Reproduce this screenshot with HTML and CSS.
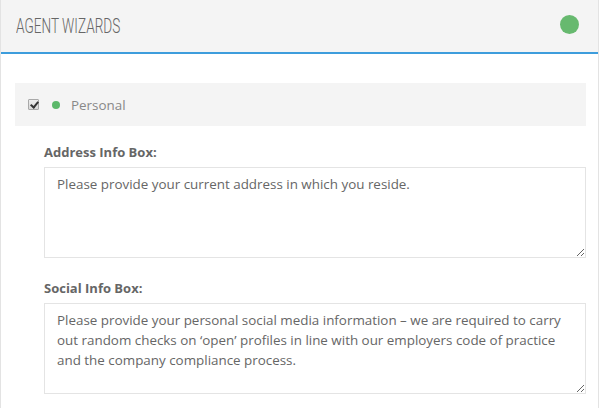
FILE: index.html
```html
<!DOCTYPE html>
<html>
<head>
<meta charset="utf-8">
<link rel="stylesheet" href="styles.css">
</head>
<body>
<div class="panel">
  <div class="panel-head">
    <span class="title">AGENT WIZARDS</span>
    <span class="status-dot"></span>
  </div>
  <div class="panel-body">
    <div class="section-row">
      <input type="checkbox" class="check" checked>
      <span class="dot"></span>
      <span class="section-name">Personal</span>
    </div>
    <div class="fields">
      <label class="field-label">Address Info Box:</label>
      <textarea class="field-box">Please provide your current address in which you reside.</textarea>
      <label class="field-label">Social Info Box:</label>
      <textarea class="field-box">Please provide your personal social media information – we are required to carry out random checks on ‘open’ profiles in line with our employers code of practice and the company compliance process.</textarea>
    </div>
  </div>
</div>
</body>
</html>
```
FILE: styles.css
```css
html, body {
  margin: 0;
  padding: 0;
  background: #fff;
}
.panel {
  width: 599px;
  box-sizing: border-box;
  border-left: 1px solid #e3e3e3;
  border-right: 1px solid #e3e3e3;
  height: 408px;
  overflow: hidden;
}
.panel-head {
  height: 52px;
  background: #f4f4f4;
  border-bottom: 2px solid #3d9ddc;
  display: flex;
  align-items: center;
  justify-content: space-between;
  padding: 0 19px 0 15px;
}
.title {
  font-family: Roboto, sans-serif;
  font-weight: 300;
  font-size: 20px;
  color: #666;
  display: inline-block;
  transform: scaleX(0.68);
  transform-origin: left center;
  margin-top: -1px;
}
.status-dot {
  width: 19px;
  height: 19px;
  border-radius: 50%;
  background: #67b96f;
  margin-top: -3px;
}
.panel-body {
  padding: 29px 12px 0 14px;
  font-family: "Open Sans", sans-serif;
}
.section-row {
  height: 43px;
  background: #f4f4f4;
  display: flex;
  align-items: center;
  padding-left: 13px;
}
.check {
  -webkit-appearance: none;
  appearance: none;
  margin: 0;
  width: 11px;
  height: 11px;
  box-sizing: border-box;
  border: 1px solid #a9a9a9;
  border-radius: 1px;
  background: linear-gradient(#ededed, #d8d8d8);
  position: relative;
  margin-top: -1px;
}
.check:checked::after {
  content: "";
  position: absolute;
  left: 3px;
  top: 0px;
  width: 3px;
  height: 6px;
  border-right: 2px solid #333;
  border-bottom: 2px solid #333;
  transform: rotate(40deg);
}
.dot {
  width: 8px;
  height: 8px;
  border-radius: 50%;
  background: #5cb86a;
  margin-left: 13px;
}
.section-name {
  margin-left: 11px;
  font-size: 13.4px;
  color: #888;
}
.fields {
  padding-left: 29px;
  display: flex;
  flex-direction: column;
}
.field-label {
  font-size: 13px;
  font-weight: bold;
  color: #666;
  line-height: 18px;
  margin-top: 17px;
  margin-bottom: 6px;
}
.fields .field-box + .field-label {
  margin-top: 21px;
}
.field-box {
  box-sizing: border-box;
  width: 100%;
  height: 91px;
  border: 1px solid #e4e4e4;
  padding: 6px 12px;
  font-family: "Open Sans", sans-serif;
  font-size: 13.4px;
  line-height: 20px;
  color: #666;
  resize: vertical;
  margin: 0;
  outline: none;
}
```
